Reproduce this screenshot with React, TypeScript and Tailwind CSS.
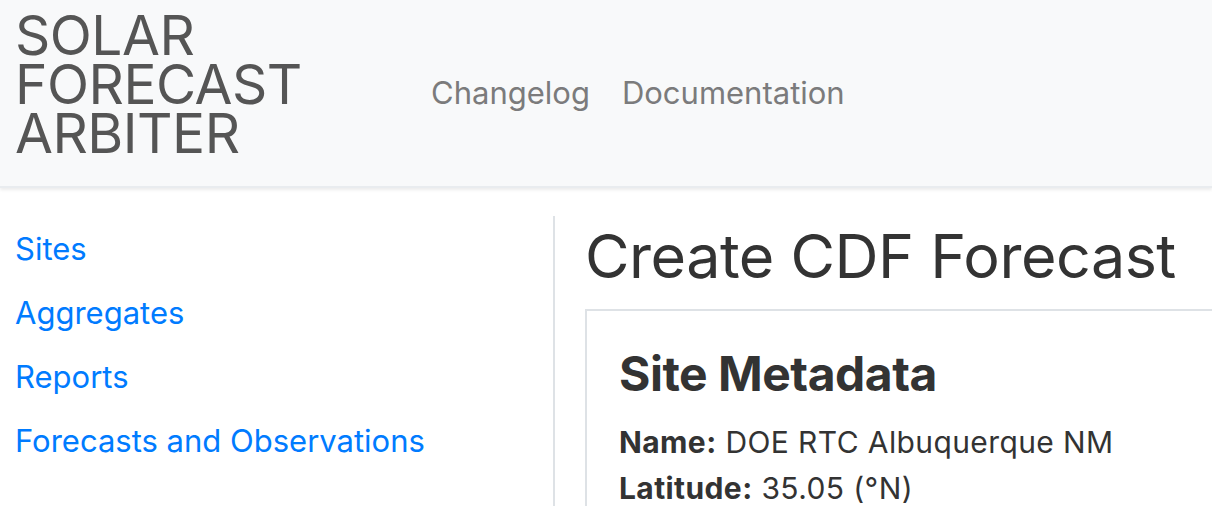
const sideLinks = ['Sites', 'Aggregates', 'Reports', 'Forecasts and Observations'];
const brand = ['SOLAR', 'FORECAST', 'ARBITER'];

export default function App() {
    return (
        <div className="min-h-screen bg-white font-['Inter','Noto_Sans',sans-serif]">
            {/* Header */}
            <header className="h-[188px] bg-[#f8f9fa] shadow-[0_2px_3px_rgba(0,0,0,0.08)] border-b-2 border-[#e9ecef] flex items-center px-[15px]">
                <a className="flex flex-col text-[55px] leading-[49px] text-[#555] tracking-[-0.5px] pb-[18px] w-[416px]">
                    {brand.map((w) => (
                        <span key={w} className="block">{w}</span>
                    ))}
                </a>
                <nav className="flex gap-[32px] text-[31px] text-[#7b7b7c]">
                    <a>Changelog</a>
                    <a>Documentation</a>
                </nav>
            </header>

            {/* Body */}
            <div className="flex pt-[28px]">
                <aside className="w-[553px] pl-[15px] pt-[14px] flex flex-col gap-[26px] text-[31px] text-[#007bff]">
                    {sideLinks.map((l) => (
                        <a key={l} className="leading-[38px]">{l}</a>
                    ))}
                </aside>
                <main className="flex-1 border-l-2 border-[#dee2e6] pl-[30px] min-h-[300px]">
                    <h2 className="text-[61px] leading-[80px] text-[#333] mb-[13px] tracking-[-0.5px]">Create CDF Forecast</h2>
                    <div className="border-2 border-r-0 border-[#dee2e6] px-[32px] pt-[35px]">
                        <h4 className="text-[48px] font-bold text-[#333] leading-[56px] mb-[18px] tracking-[-0.5px]">Site Metadata</h4>
                        <p className="text-[30px] text-[#333] leading-[44px] tracking-[0.4px]"><b>Name:</b> DOE RTC Albuquerque NM</p>
                        <p className="text-[30px] text-[#333] leading-[44px] tracking-[0.4px] pt-[2px]"><b>Latitude:</b> 35.05 (°N)</p>
                    </div>
                </main>
            </div>
        </div>
    );
}
